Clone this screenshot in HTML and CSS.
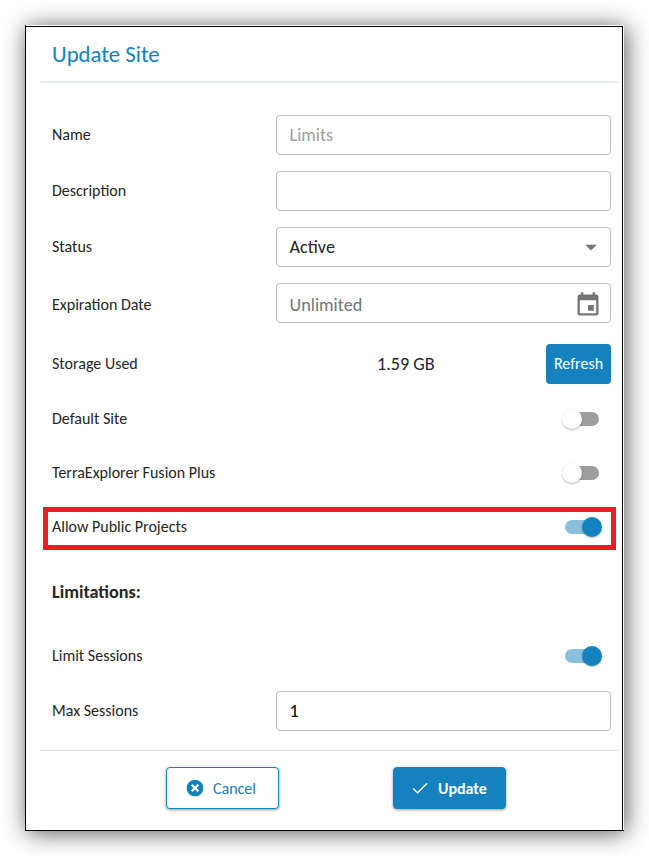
FILE: index.html
```html
<!DOCTYPE html>
<html lang="en">
    <head>
        <meta charset="utf-8">
        <title>Update Site</title>
        <link rel="stylesheet" href="styles.css">
    </head>
    <body>
        <div class="frame">
            <div class="dialog">
                <div class="header">Update Site</div>
                <div class="content">
                    <div class="row">
                        <div class="label">Name</div>
                        <div class="field disabled">Limits</div>
                    </div>
                    <div class="row">
                        <div class="label">Description</div>
                        <div class="field"></div>
                    </div>
                    <div class="row">
                        <div class="label">Status</div>
                        <div class="field select">
                            <span>Active</span>
                            <svg class="arrow" viewBox="0 0 24 24"><path d="M7 10l5 5 5-5z"/></svg>
                        </div>
                    </div>
                    <div class="row">
                        <div class="label date-label">Expiration Date</div>
                        <div class="field date">
                            <span>Unlimited</span>
                            <svg class="calendar" viewBox="0 0 24 24"><path d="M17 12h-5v5h5v-5zM16 1v2H8V1H6v2H5c-1.11 0-1.99.9-1.99 2L3 19c0 1.1.89 2 2 2h14c1.1 0 2-.9 2-2V5c0-1.1-.9-2-2-2h-1V1h-2zm3 18H5V8h14v11z"/></svg>
                        </div>
                    </div>
                    <div class="row storage">
                        <div class="label">Storage Used</div>
                        <div class="used">1.59 GB</div>
                        <button class="refresh">Refresh</button>
                    </div>
                    <div class="row switch-row">
                        <div class="label">Default Site</div>
                        <div class="switch"></div>
                    </div>
                    <div class="row switch-row">
                        <div class="label">TerraExplorer Fusion Plus</div>
                        <div class="switch"></div>
                    </div>
                    <div class="row switch-row highlight">
                        <div class="label">Allow Public Projects</div>
                        <div class="switch on"></div>
                    </div>
                    <div class="section-title">Limitations:</div>
                    <div class="row switch-row">
                        <div class="label">Limit Sessions</div>
                        <div class="switch on"></div>
                    </div>
                    <div class="row max-row">
                        <div class="label">Max Sessions</div>
                        <div class="field number">1</div>
                    </div>
                </div>
                <div class="footer">
                    <button class="action cancel">
                        <svg viewBox="0 0 24 24"><path d="M12 2C6.47 2 2 6.47 2 12s4.47 10 10 10 10-4.47 10-10S17.53 2 12 2z"/><path class="cross" d="M8 8l8 8M16 8l-8 8"/></svg>
                        <span>Cancel</span>
                    </button>
                    <button class="action update">
                        <svg viewBox="0 0 24 24"><path d="M9 16.6L4.4 12l-1.2 1.2L9 19 21.2 6.8l-1.2-1.2z"/></svg>
                        <span>Update</span>
                    </button>
                </div>
            </div>
        </div>
    </body>
</html>
```

FILE: styles.css
```css
body {
    box-sizing: border-box;
    height: 856px;
    margin: 0;
    padding: 25px 0 0 25px;
    background: white;
    font-family: Calibri, Carlito, Lato, sans-serif;
    color: #262626;
}
.frame {
    box-sizing: border-box;
    width: 599px;
    height: 806px;
    padding: 1px 1px 0 0;
    background: white;
    border-left: 1px solid black;
    border-bottom: 1px solid black;
    box-shadow: 2px 2px 22px rgba(0, 0, 0, 0.65);
}
.dialog {
    box-sizing: border-box;
    height: 804px;
    border-top: 1px solid black;
    border-right: 1px solid black;
    padding: 0 4px 0 14px;
}
.header {
    box-sizing: border-box;
    height: 56px;
    padding-left: 12px;
    border-bottom: 2px solid #e4eef6;
    line-height: 55px;
    font-size: 22.8px;
    color: #1482be;
}
.content {
    padding: 32px 7px 19px 12px;
}
.row {
    display: flex;
    align-items: center;
    height: 40px;
    margin-bottom: 16px;
}
.label {
    width: 224px;
    padding-bottom: 2px;
    font-size: 16px;
}
.date-label {
    padding-top: 4px;
}
.field {
    box-sizing: border-box;
    display: flex;
    align-items: center;
    justify-content: space-between;
    flex: 1;
    height: 40px;
    padding: 0 13px 0 12.5px;
    border: 1px solid #bfbfbf;
    border-radius: 4px;
    font-size: 18.2px;
}
.disabled {
    color: #a0a0a0;
}
.field svg {
    width: 28px;
    height: 28px;
    fill: #757575;
}
.arrow {
    margin-right: -8px;
}
.date {
    padding-top: 4px;
    color: #757575;
}
.calendar {
    margin-right: -5px;
}
.storage {
    margin: 21px 0 8px;
}
.used {
    flex: 1;
    margin-left: 101px;
    font-size: 18.2px;
}
.refresh {
    width: 65px;
    height: 40px;
    padding: 0 0 1px;
    border: none;
    border-radius: 4px;
    background: #1482be;
    color: white;
    font-family: inherit;
    font-size: 16px;
}
.switch-row {
    justify-content: space-between;
    height: 54px;
    margin: 0;
}
.switch {
    position: relative;
    width: 34px;
    height: 14px;
    margin-right: 12px;
    border-radius: 7px;
    background: #9e9e9e;
}
.switch::after {
    content: '';
    position: absolute;
    top: -3px;
    left: -3px;
    width: 20px;
    height: 20px;
    border-radius: 50%;
    background: white;
    box-shadow: 0 1px 2px rgba(0, 0, 0, 0.3);
}
.switch.on {
    background: #89c0de;
}
.switch.on::after {
    left: 17px;
    background: #1482be;
}
.highlight {
    position: relative;
}
.highlight::before {
    content: '';
    position: absolute;
    top: 7px;
    left: -9px;
    right: -5px;
    height: 33px;
    border: 5px solid #ed1c24;
}
.section-title {
    height: 75px;
    line-height: 76px;
    font-size: 18.2px;
    font-weight: bold;
}
.max-row {
    margin: 8px 0 0;
}
.number {
    color: black;
}
.footer {
    display: flex;
    gap: 114px;
    padding: 16px 0 0 126px;
    border-top: 1px solid #dedede;
}
.action {
    box-sizing: border-box;
    display: flex;
    align-items: center;
    width: 113px;
    height: 42px;
    padding: 0 0 0 18px;
    border: 1px solid #1482be;
    border-radius: 4px;
    background: white;
    box-shadow: 0 1px 3px rgba(0, 0, 0, 0.4);
    color: #1482be;
    font-family: inherit;
    font-size: 16px;
}
.action svg {
    width: 20px;
    height: 20px;
    margin-right: 8px;
    fill: #1482be;
}
.action .cross {
    stroke: white;
    stroke-width: 2.6;
}
.update {
    padding-left: 16px;
    background: #1482be;
    color: white;
    font-weight: bold;
}
.update svg {
    fill: white;
}
```
